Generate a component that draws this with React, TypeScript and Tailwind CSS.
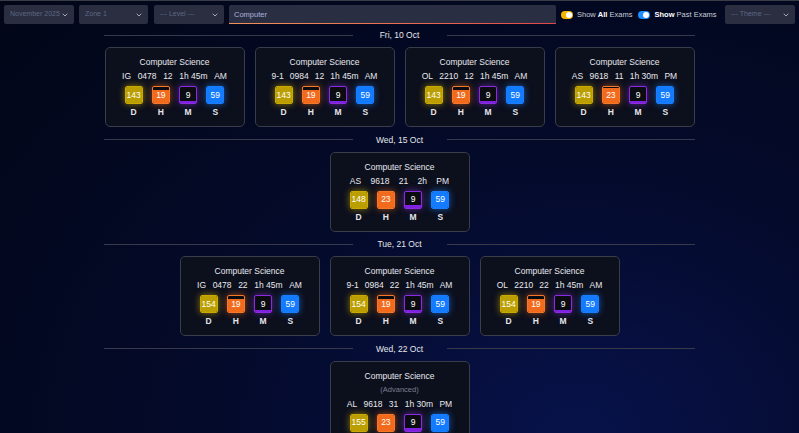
import { ChevronDown } from "lucide-react";

type Exam = {
  lvl: string;
  code: string;
  paper: string;
  dur: string;
  sess: string;
  sub?: string;
  d: number;
  h: number;
  m: number;
  s: number;
};

const sections: { date: string; exams: Exam[] }[] = [
  {
    date: "Fri, 10 Oct",
    exams: [
      { lvl: "IG", code: "0478", paper: "12", dur: "1h 45m", sess: "AM", d: 143, h: 19, m: 9, s: 59 },
      { lvl: "9-1", code: "0984", paper: "12", dur: "1h 45m", sess: "AM", d: 143, h: 19, m: 9, s: 59 },
      { lvl: "OL", code: "2210", paper: "12", dur: "1h 45m", sess: "AM", d: 143, h: 19, m: 9, s: 59 },
      { lvl: "AS", code: "9618", paper: "11", dur: "1h 30m", sess: "PM", d: 143, h: 23, m: 9, s: 59 },
    ],
  },
  {
    date: "Wed, 15 Oct",
    exams: [{ lvl: "AS", code: "9618", paper: "21", dur: "2h", sess: "PM", d: 148, h: 23, m: 9, s: 59 }],
  },
  {
    date: "Tue, 21 Oct",
    exams: [
      { lvl: "IG", code: "0478", paper: "22", dur: "1h 45m", sess: "AM", d: 154, h: 19, m: 9, s: 59 },
      { lvl: "9-1", code: "0984", paper: "22", dur: "1h 45m", sess: "AM", d: 154, h: 19, m: 9, s: 59 },
      { lvl: "OL", code: "2210", paper: "22", dur: "1h 45m", sess: "AM", d: 154, h: 19, m: 9, s: 59 },
    ],
  },
  {
    date: "Wed, 22 Oct",
    exams: [
      { lvl: "AL", code: "9618", paper: "31", dur: "1h 30m", sess: "PM", sub: "(Advanced)", d: 155, h: 23, m: 9, s: 59 },
    ],
  },
];

const boxStyles = {
  D: { border: "border-[#c9a800]", fill: "bg-[#bb9f00]", glow: "shadow-[0_0_7px_rgba(230,190,0,0.6)]" },
  H: { border: "border-[#f4772a]", fill: "bg-[#f26a1c]", glow: "shadow-[0_0_7px_rgba(250,110,30,0.6)]" },
  M: { border: "border-[#8a2be2]", fill: "bg-[#7e22e0]", glow: "shadow-[0_0_7px_rgba(140,50,230,0.6)]" },
  S: { border: "border-[#1a7cff]", fill: "bg-[#137bff]", glow: "shadow-[0_0_7px_rgba(30,130,255,0.65)]" },
};

function Select({ label, w }: { label: string; w: string }) {
  return (
    <div className={`${w} h-[19px] rounded-[2px] bg-[#2a2e40] flex items-center justify-between pl-[6px] pr-[5px]`}>
      <span className="text-[7px] text-[#5f6786] truncate">{label}</span>
      <ChevronDown className="h-[8px] w-[8px] text-[#a3a8b8]" strokeWidth={3} />
    </div>
  );
}

function Toggle({ color }: { color: string }) {
  return (
    <span className={`w-[12px] h-[8px] rounded-full ${color} flex items-center justify-end pr-[1px]`}>
      <span className="w-[6px] h-[6px] rounded-full bg-white" />
    </span>
  );
}

function CountBox({ kind, value, pct }: { kind: "D" | "H" | "M" | "S"; value: number; pct: number }) {
  const st = boxStyles[kind];
  return (
    <div className="w-[18px] flex flex-col items-center">
      <div
        className={`relative w-[18px] h-[18px] rounded-[2px] border ${st.border} ${st.glow} bg-[#0b0b12] overflow-hidden flex items-center justify-center`}
      >
        <div className={`absolute left-0 right-0 bottom-0 ${st.fill}`} style={{ height: `${pct}%` }} />
        <span className="relative text-[8.5px] text-white leading-none">{value}</span>
      </div>
      <span className="mt-[2px] text-[8.5px] font-semibold leading-[12px] text-[#e5e7eb]">{kind}</span>
    </div>
  );
}

function ExamCard({ e }: { e: Exam }) {
  return (
    <div className="w-[140px] rounded-[5px] border border-[#393d49] bg-[#0c0f1c] px-[10px] pt-[8px] pb-[8px] flex flex-col items-center">
      <div className="text-[8.5px] leading-[12px] text-[#e8e9ee]">Computer Science</div>
      {e.sub && <div className="mt-[2px] text-[7.5px] leading-[12px] text-[#7b8090]">{e.sub}</div>}
      <div className="w-full flex justify-evenly mt-[2px] text-[8.5px] leading-[12px] text-[#e8e9ee]">
        <span>{e.lvl}</span>
        <span>{e.code}</span>
        <span>{e.paper}</span>
        <span>{e.dur}</span>
        <span>{e.sess}</span>
      </div>
      <div className="w-full flex justify-evenly mt-[4px]">
        <CountBox kind="D" value={e.d} pct={100} />
        <CountBox kind="H" value={e.h} pct={(e.h / 24) * 100} />
        <CountBox kind="M" value={e.m} pct={(e.m / 60) * 100} />
        <CountBox kind="S" value={e.s} pct={(e.s / 60) * 100} />
      </div>
    </div>
  );
}

export default function App() {
  return (
    <div
      className="h-screen overflow-hidden bg-[radial-gradient(ellipse_at_72%_100%,#07124a_0%,#040a2a_45%,#020617_100%)] border-t border-[#3a3d48]"
      style={{ fontFamily: '"Liberation Sans", Arial, sans-serif' }}
    >
      {/* top bar */}
      <div className="h-[27px] flex items-center px-[4px]">
        <Select label="November 2025" w="w-[70px]" />
        <div className="ml-[5px]">
          <Select label="Zone 1" w="w-[69px]" />
        </div>
        <div className="ml-[6px]">
          <Select label="--- Level ---" w="w-[70px]" />
        </div>
        <div className="ml-[5px] w-[327px] h-[19px] relative bg-[#2a2e43] rounded-t-[2px] flex items-center pl-[5px]">
          <span className="text-[7.5px] font-medium text-[#aab3dc]">Computer</span>
          <div className="absolute left-0 right-0 bottom-0 h-[1.5px] bg-gradient-to-r from-[#f0925a] to-[#e0474a]" />
        </div>
        <div className="ml-[5px] flex items-center gap-[4px]">
          <Toggle color="bg-[#f5b400]" />
          <span className="text-[7.5px] text-[#c9ccd6]">
            Show <b className="text-white">All</b> Exams
          </span>
        </div>
        <div className="ml-[6px] flex items-center gap-[4px]">
          <Toggle color="bg-[#1e8fff]" />
          <span className="text-[7.5px] text-[#c9ccd6]">
            <b className="text-white">Show</b> Past Exams
          </span>
        </div>
        <div className="ml-auto">
          <Select label="--- Theme ---" w="w-[70px]" />
        </div>
      </div>

      {/* sections */}
      <div className="w-[591px] mx-auto pt-[1px] flex flex-col gap-[6.5px]">
        {sections.map((sec) => (
          <div key={sec.date} className="flex flex-col gap-[6px]">
            <div className="h-[12px] flex items-center">
              <div className="flex-1 h-px bg-[#363a4a]" />
              <div className="w-[94px] text-center text-[8.5px] leading-[12px] text-[#e5e7eb]">{sec.date}</div>
              <div className="flex-1 h-px bg-[#363a4a]" />
            </div>
            <div className="flex justify-center gap-[10px]">
              {sec.exams.map((e, i) => (
                <ExamCard key={i} e={e} />
              ))}
            </div>
          </div>
        ))}
      </div>
    </div>
  );
}
